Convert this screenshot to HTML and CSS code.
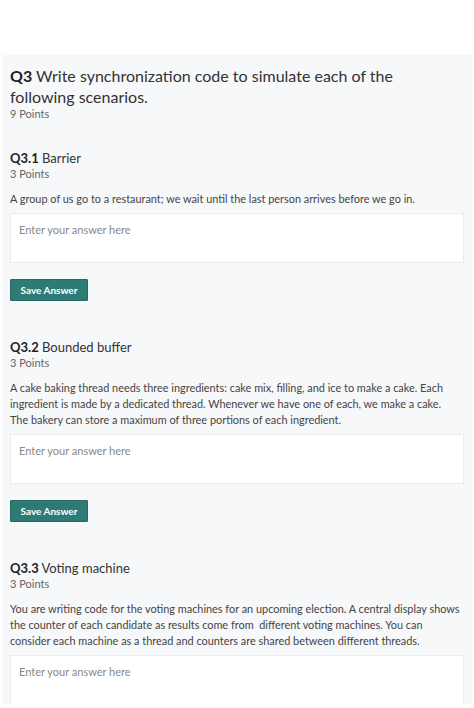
FILE: index.html
```html
<!DOCTYPE html>
<html lang="en">
<head>
  <meta charset="UTF-8" />
  <title>Q3 Synchronization</title>
  <meta name="viewport" content="width=device-width, initial-scale=1.0" />
  <link rel="stylesheet" href="styles.css">
</head>
<body>

  <div class="question">
    <h1 class="q-title"><b>Q3</b> Write synchronization code to simulate each of the following scenarios.</h1>
    <div class="points">9 Points</div>

    <div class="part part-first">
      <h2 class="p-title"><b>Q3.1</b> Barrier</h2>
      <div class="points">3 Points</div>
      <p class="desc">A group of us go to a restaurant; we wait until the last person arrives before we go in.</p>
      <textarea class="answer" placeholder="Enter your answer here"></textarea>
      <button class="btn-save">Save Answer</button>
    </div>

    <div class="part">
      <h2 class="p-title"><b>Q3.2</b> Bounded buffer</h2>
      <div class="points">3 Points</div>
      <p class="desc">A cake baking thread needs three ingredients: cake mix, filling, and ice to make a cake. Each ingredient is made by a dedicated thread. Whenever we have one of each, we make a cake. The bakery can store a maximum of three portions of each ingredient.</p>
      <textarea class="answer" placeholder="Enter your answer here"></textarea>
      <button class="btn-save">Save Answer</button>
    </div>

    <div class="part">
      <h2 class="p-title"><b>Q3.3</b> Voting machine</h2>
      <div class="points">3 Points</div>
      <p class="desc">You are writing code for the voting machines for an upcoming election. A central display shows the counter of each candidate as results come from &nbsp;different voting machines. You can consider each machine as a thread and counters are shared between different threads.</p>
      <textarea class="answer" placeholder="Enter your answer here"></textarea>
    </div>
  </div>

</body>
</html>
```

FILE: styles.css
```css
body {
  margin: 0;
  padding-top: 55px;
  font-family: Lato, "Open Sans", sans-serif;
  color: #333;
  background: #fff;
}

.question {
  margin: 0 2px;
  padding: 10px 6px 0 8px;
  background: #f7f8fa;
  height: 649px;
  overflow: hidden;
  box-sizing: border-box;
}

.q-title {
  margin: 0;
  max-width: 420px;
  font-size: 16px;
  font-weight: normal;
  line-height: 21px;
}

.q-title b,
.p-title b {
  font-weight: bold;
  color: #222;
}

.points {
  font-size: 11px;
  line-height: 14px;
  color: #666;
}

.part {
  margin-top: 37px;
}

.part-first {
  margin-top: 28px;
}

.p-title {
  margin: 0;
  font-size: 13px;
  font-weight: normal;
  line-height: 18px;
}

.desc {
  margin: 10px 0 0 0;
  max-width: 451px;
  font-size: 10.9px;
  line-height: 16px;
  color: #444;
}

.answer {
  display: block;
  width: calc(100% - 2px);
  height: 50px;
  margin-top: 6px;
  padding: 9px 8px;
  box-sizing: border-box;
  border: 1px solid #eaebee;
  background: #fff;
  font-family: Lato, "Open Sans", sans-serif;
  font-size: 11px;
  resize: none;
}

.answer::placeholder {
  color: #888;
}

.btn-save {
  display: block;
  margin-top: 16px;
  width: 78px;
  height: 22px;
  padding: 0;
  background: #2e7b76;
  color: #fff;
  border: 1px solid #276a65;
  border-radius: 1px;
  font-family: Lato, "Open Sans", sans-serif;
  font-size: 10px;
  font-weight: bold;
  cursor: pointer;
}
```
